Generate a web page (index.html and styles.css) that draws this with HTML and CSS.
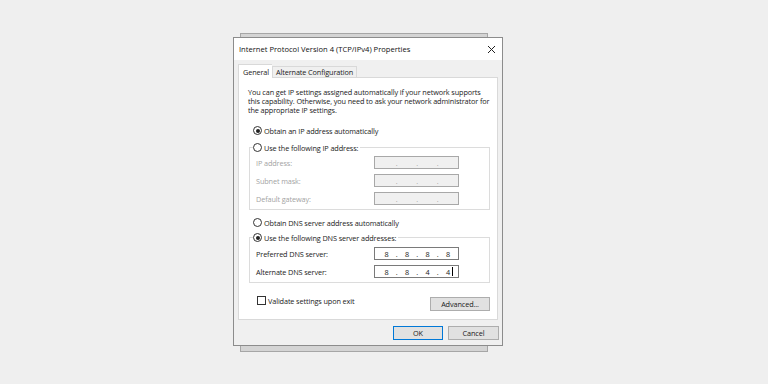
FILE: index.html
```html
<!DOCTYPE html>
<html>
<head>
<meta charset="utf-8">
<link rel="stylesheet" href="styles.css">
</head>
<body>
<div class="desktop">
  <div class="backwin"></div>
  <div class="dialog">
    <div class="titlebar">
      <span class="title">Internet Protocol Version 4 (TCP/IPv4) Properties</span>
      <svg class="close" width="9" height="9" viewBox="0 0 9 9"><path d="M1 1 L8 8 M8 1 L1 8" stroke="#222" stroke-width="1" fill="none"/></svg>
    </div>
    <div class="body">
      <div class="tabs">
        <div class="tab active">General</div>
        <div class="tab">Alternate Configuration</div>
      </div>
      <div class="panel">
        <p class="intro">You can get IP settings assigned automatically if your network supports this capability. Otherwise, you need to ask your network administrator for the appropriate IP settings.</p>
        <div class="radio-row first"><span class="radio checked"></span><span>Obtain an IP address automatically</span></div>
        <div class="group g1">
          <div class="group-title"><span class="radio"></span><span>Use the following IP address:</span></div>
          <div class="field disabled"><span class="flabel">IP address:</span><span class="ipbox"><span class="seg"></span><span class="dot">.</span><span class="seg"></span><span class="dot">.</span><span class="seg"></span><span class="dot">.</span><span class="seg"></span></span></div>
          <div class="field disabled"><span class="flabel">Subnet mask:</span><span class="ipbox"><span class="seg"></span><span class="dot">.</span><span class="seg"></span><span class="dot">.</span><span class="seg"></span><span class="dot">.</span><span class="seg"></span></span></div>
          <div class="field disabled"><span class="flabel">Default gateway:</span><span class="ipbox"><span class="seg"></span><span class="dot">.</span><span class="seg"></span><span class="dot">.</span><span class="seg"></span><span class="dot">.</span><span class="seg"></span></span></div>
        </div>
        <div class="radio-row dns"><span class="radio"></span><span>Obtain DNS server address automatically</span></div>
        <div class="group g2">
          <div class="group-title"><span class="radio checked"></span><span>Use the following DNS server addresses:</span></div>
          <div class="field"><span class="flabel">Preferred DNS server:</span><span class="ipbox"><span class="seg">8</span><span class="dot">.</span><span class="seg">8</span><span class="dot">.</span><span class="seg">8</span><span class="dot">.</span><span class="seg">8</span></span></div>
          <div class="field"><span class="flabel">Alternate DNS server:</span><span class="ipbox"><span class="seg">8</span><span class="dot">.</span><span class="seg">8</span><span class="dot">.</span><span class="seg">4</span><span class="dot">.</span><span class="seg caret">4</span></span></div>
        </div>
        <div class="bottom-row">
          <div class="check-row"><span class="checkbox"></span><span>Validate settings upon exit</span></div>
          <div class="btn adv">Advanced...</div>
        </div>
      </div>
      <div class="footer">
        <div class="btn ok">OK</div>
        <div class="btn cancel">Cancel</div>
      </div>
    </div>
  </div>
</div>
</body>
</html>
```
FILE: styles.css
```css
* { box-sizing: border-box; }
html, body { margin: 0; padding: 0; }
body {
  width: 768px;
  height: 384px;
  background: #efefef;
  font-family: "Open Sans", "Liberation Sans", sans-serif;
  font-size: 7.3px;
  color: #1a1a1a;
  overflow: hidden;
}
.desktop { position: relative; width: 768px; height: 384px; }
.backwin {
  position: absolute;
  left: 240px; top: 33px;
  width: 248px; height: 319px;
  background: #d4d4d4;
  border: 1px solid #a6a6a6;
}
.dialog {
  position: absolute;
  left: 233px; top: 37px;
  width: 270px; height: 309px;
  background: #f0f0f0;
  border: 1px solid #8c8c8c;
  display: flex;
  flex-direction: column;
}
.titlebar {
  height: 22px;
  background: #ffffff;
  display: flex;
  align-items: center;
  justify-content: space-between;
  padding: 0 6px 0 5px;
  color: #111;
}
.title { font-size: 7.6px; }
.close { display: block; margin-top: 1px; }
.body { padding: 4px 3px 0 4px; flex: 1; display: flex; flex-direction: column; letter-spacing: -0.12px; }
.tabs { display: flex; align-items: flex-end; height: 13px; position: relative; z-index: 1; }
.tab {
  height: 11px;
  padding: 0 3px;
  border: 1px solid #d9d9d9;
  border-bottom: none;
  background: #f0f0f0;
  display: flex;
  align-items: center;
}
.tab.active {
  height: 14px;
  margin-bottom: -1px;
  background: #fff;
  padding: 0 4px;
  width: 34px;
  border-right: none;
}
.panel {
  width: 260px;
  background: #fff;
  border: 1px solid #d9d9d9;
  padding: 10px 7px 8px 0;
  display: flex;
  flex-direction: column;
}
.intro {
  margin: 0 0 0 9px;
  line-height: 9px;
  width: 242px;
}
.radio-row, .group-title, .check-row {
  display: flex;
  align-items: center;
  height: 11px;
  gap: 2px;
}
.radio-row.first { margin: 10px 0 0 14px; }
.radio {
  width: 9px; height: 9px;
  border: 1px solid #333;
  border-radius: 50%;
  background: #fff;
  display: flex; align-items: center; justify-content: center;
  flex: none;
}
.radio.checked::after {
  content: "";
  width: 4px; height: 4px;
  border-radius: 50%;
  background: #222;
}
.group {
  margin-left: 10px;
  border: 1px solid #dcdcdc;
  padding: 0 0 4px 6px;
  display: flex;
  flex-direction: column;
}
.g1 { margin-top: 11px; }
.group-title {
  margin: -6px 0 0 -3px;
  background: #fff;
  align-self: flex-start;
  padding-right: 2px;
}
.field {
  display: flex;
  align-items: center;
  height: 13px;
  margin-top: 5px;
}
.group-title + .field { margin-top: 3px; }
.g2 .group-title + .field { margin-top: 4px; }
.flabel { width: 118px; }
.disabled .flabel { color: #a3a3a3; }
.ipbox {
  width: 85px; height: 13px;
  border: 1px solid #7a7a7a;
  background: #fff;
  display: flex;
  align-items: center;
  padding-left: 4px;
  font-size: 7.3px;
  letter-spacing: 0;
}
.disabled .ipbox { background: #f0f0f0; border-color: #a8a8a8; color: #a3a3a3; }
.seg { width: 15px; text-align: center; position: relative; }
.dot { width: 5.5px; text-align: center; }
.caret::after {
  content: "";
  position: absolute;
  right: 3px; top: 0;
  width: 1px; height: 9px;
  background: #000;
}
.radio-row.dns { margin: 7px 0 0 14px; }
.g2 { margin-top: 9px; }
.bottom-row {
  display: flex;
  justify-content: space-between;
  align-items: flex-start;
  margin: 12px 0 0 18px;
}
.check-row { margin-top: 0; gap: 2px; }
.checkbox {
  width: 9px; height: 9px;
  border: 1px solid #333;
  background: #fff;
  flex: none;
}
.btn {
  height: 14px;
  border: 1px solid #adadad;
  background: #e1e1e1;
  display: flex;
  align-items: center;
  justify-content: center;
}
.adv { width: 60px; margin-top: 2px; }
.footer {
  display: flex;
  justify-content: flex-end;
  gap: 5px;
  margin-top: 6px;
  padding-right: 0;
}
.ok { width: 50px; border-color: #0078d7; }
.cancel { width: 51px; }
```
